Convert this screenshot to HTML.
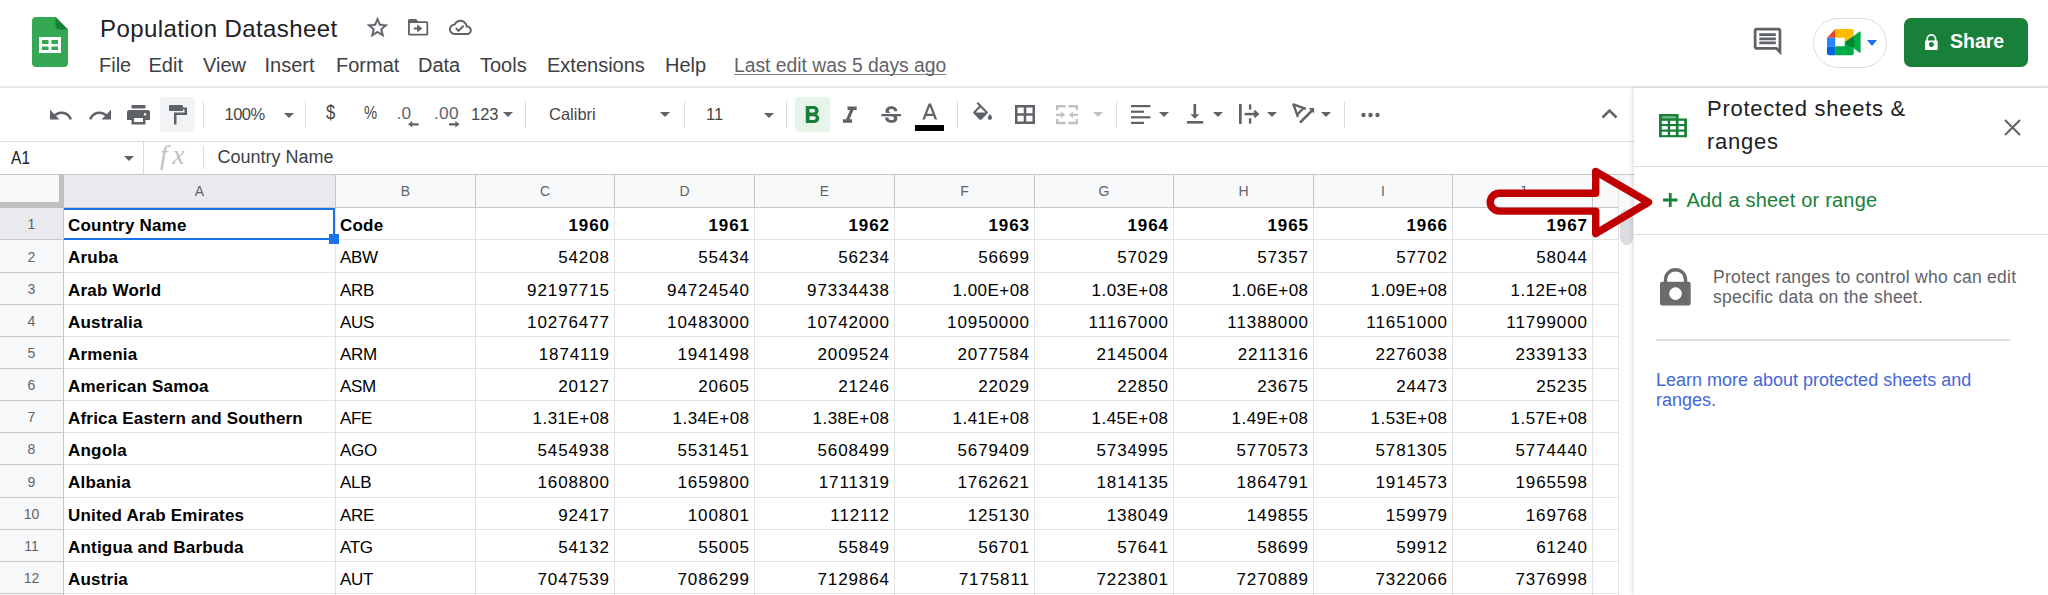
<!DOCTYPE html>
<html><head><meta charset="utf-8"><style>
html,body{margin:0;padding:0;background:#fff;width:2048px;height:595px;overflow:hidden;position:relative;font-family:"Liberation Sans",sans-serif;}
.abs{position:absolute;}
.menu{position:absolute;top:52px;font-size:20px;color:#3c4043;line-height:26px;white-space:nowrap}
.tb{position:absolute;fill:#5f6368}
.sep{position:absolute;top:101px;width:1px;height:27px;background:#dadce0}
.ddarr{position:absolute;top:112px;width:0;height:0;border-left:5.2px solid transparent;border-right:5.2px solid transparent;border-top:5.8px solid #5f6368}
.tbt{position:absolute;top:102px;font-size:16.5px;color:#444746;line-height:24px;white-space:nowrap}
.colh{height:32px;line-height:32px;text-align:center;font-size:14px;color:#5f6368}
.rowh{text-align:center;font-size:14px;color:#5f6368}
.cell{font-size:17px;color:#000;white-space:nowrap;letter-spacing:0.45px}
.cell.b{font-weight:bold}
</style></head><body>
<!-- logo -->
<svg class="abs" style="left:32px;top:17px" width="36" height="50" viewBox="0 0 36 50">
<path d="M4 0 H23.5 L36 12.5 V46 Q36 50 32 50 H4 Q0 50 0 46 V4 Q0 0 4 0 Z" fill="#34a853"/>
<path d="M23.5 0 L36 12.5 H27.5 Q23.5 12.5 23.5 8.5 Z" fill="#188038"/>
<path d="M7 20 H29 V36 H7 Z M10 23 V27 H16.5 V23 Z M19.5 23 V27 H26 V23 Z M10 29.5 V33 H16.5 V29.5 Z M19.5 29.5 V33 H26 V29.5 Z" fill="#fff" fill-rule="evenodd"/>
</svg>
<div class="abs" style="left:100px;top:13.7px;font-size:24px;letter-spacing:0.4px;color:#202124;line-height:30px;white-space:nowrap">Population Datasheet</div>
<!-- star -->
<svg class="abs" style="left:364.7px;top:14.9px" width="25" height="25" viewBox="0 0 24 24"><path fill="#5f6368" stroke="#5f6368" stroke-width="0.35" d="M22 9.24l-7.19-.62L12 2 9.19 8.63 2 9.24l5.46 4.73L5.82 21 12 17.27 18.18 21l-1.63-7.03L22 9.24zM12 15.4l-3.76 2.27 1-4.28-3.32-2.88 4.38-.38L12 6.1l1.71 4.04 4.38.38-3.32 2.88 1 4.28L12 15.4z"/></svg>
<!-- folder -->
<svg class="abs" style="left:408px;top:18.8px" width="21" height="17" viewBox="0 0 21 17"><path fill="#5f6368" fill-rule="evenodd" d="M0 1.5 Q0 0 1.5 0 H8 L10 2.2 H18.7 Q20.2 2.2 20.2 3.7 V14.9 Q20.2 16.4 18.7 16.4 H1.5 Q0 16.4 0 14.9 Z M1.8 4.1 H18.4 V14.7 H1.8 Z"/><path fill="#5f6368" d="M5.9 8.4 H9.2 V5.3 L14.2 9.5 L9.2 13.4 V10.6 H5.9 Z"/></svg>
<!-- cloud -->
<svg class="abs" style="left:449px;top:15.8px" width="22.8" height="22.8" viewBox="0 0 24 24"><path fill="#5f6368" d="M19.35 10.04C18.67 6.59 15.64 4 12 4 9.11 4 6.6 5.64 5.35 8.04 2.34 8.36 0 10.91 0 14c0 3.31 2.69 6 6 6h13c2.76 0 5-2.24 5-5 0-2.640-2.05-4.78-4.65-4.960zM19 18H6c-2.21 0-4-1.79-4-4 0-2.05 1.53-3.76 3.56-3.97l1.07-.11.5-.95C8.080 7.14 9.940 6 12 6c2.62 0 4.88 1.86 5.39 4.43l.3 1.5 1.53.11c1.56.1 2.78 1.41 2.78 2.96 0 1.65-1.35 3-3 3zm-9-3.82l-2.090-2.090L6.5 13.5 10 17l6.010-6.010-1.410-1.410z"/></svg>

<div class="menu" style="left:99px">File</div>
<div class="menu" style="left:148.5px">Edit</div>
<div class="menu" style="left:203px">View</div>
<div class="menu" style="left:264.5px">Insert</div>
<div class="menu" style="left:336px">Format</div>
<div class="menu" style="left:418px">Data</div>
<div class="menu" style="left:480px">Tools</div>
<div class="menu" style="left:547px">Extensions</div>
<div class="menu" style="left:665px">Help</div>
<div class="menu" style="left:734px;top:52.7px;color:#5f6368;text-decoration:underline;text-underline-offset:2px;text-decoration-skip-ink:none;text-decoration-color:#80868b;font-size:19.3px">Last edit was 5 days ago</div>

<!-- comment icon -->
<svg class="abs" style="left:1750.9px;top:24.6px" width="33.1" height="33.1" viewBox="0 0 24 24"><path fill="#5f6368" d="M21.99 4c0-1.1-.89-2-1.99-2H4c-1.1 0-2 .9-2 2v12c0 1.1.9 2 2 2h14l4 4-.01-18zM20 4v13.17L18.83 16H4V4h16zM6 12h12v2H6zm0-3h12v2H6zm0-3h12v2H6z"/></svg>
<!-- meet -->
<div class="abs" style="left:1813.2px;top:17.6px;width:72px;height:48px;border:1px solid #dadce0;border-radius:25px;box-sizing:content-box"></div>
<svg class="abs" style="left:1827.4px;top:29.1px" width="34" height="27" viewBox="0 0 34 27">
<path fill="#ffba00" d="M8.2 0 H24.7 Q26.7 0 26.7 2 V7.1 L17.7 13.1 V8.7 H8.2 Z"/>
<path fill="#00ac47" d="M17.7 13.1 V17.2 H8.2 V26.2 H24.7 Q26.7 26.2 26.7 24.2 V19.3 Z"/>
<path fill="#00ac47" d="M26.7 7.1 L31.8 3 Q33.6 1.8 33.6 4 V22.5 Q33.6 24.6 31.8 23.3 L26.7 19.3 Z"/>
<path fill="#00832d" d="M17.7 13.1 L21 16.6 L26.7 19.3 L27.5 13.1 L26.7 7.1 L22.2 10 Z"/>
<path fill="#e94235" d="M0 8.7 L8.2 0 V8.7 Z"/>
<path fill="#2684fc" d="M0 8.7 H8.2 V17.6 H0 Z"/>
<path fill="#0066da" d="M0 17.6 H8.2 V26.2 H2 Q0 26.2 0 24.2 Z"/>
</svg>
<div class="abs" style="left:1867px;top:40px;width:0;height:0;border-left:5px solid transparent;border-right:5px solid transparent;border-top:6px solid #1a73e8"></div>
<!-- share -->
<div class="abs" style="left:1904px;top:18px;width:124px;height:49px;background:#188038;border-radius:7px"></div>
<svg class="abs" style="left:1924.8px;top:33.5px" width="13" height="16" viewBox="0 0 13 16"><path d="M2.15 7 V5 A4.2 4.2 0 0 1 10.55 5 V7" fill="none" stroke="#fff" stroke-width="1.7"/><path fill="#fff" fill-rule="evenodd" d="M1 6.5 H11.7 Q12.7 6.5 12.7 7.5 V14.9 Q12.7 15.9 11.7 15.9 H1 Q0 15.9 0 14.9 V7.5 Q0 6.5 1 6.5 Z M6.4 8.1 A2.5 2.5 0 1 0 6.41 8.1 Z"/></svg>
<div class="abs" style="left:1950px;top:28.5px;font-size:19.5px;font-weight:bold;color:#fff;line-height:24px">Share</div>

<!-- header bottom line -->
<div class="abs" style="left:0;top:86px;width:2048px;height:2.3px;background:#e6e8eb"></div>

<!-- toolbar -->
<div class="abs" style="left:0;top:141px;width:1634px;height:1px;background:#dadce0"></div>
<svg class="tb" style="left:49px;top:108px" width="24" height="13" viewBox="0 0 24 13"><path d="M1 1.5 V11.5 H10.5 L7 8 A8.5 8.5 0 0 1 20.5 11.8 L23 11 A11 11 0 0 0 5.2 6.2 Z"/></svg>
<svg class="tb" style="left:88px;top:108px" width="24" height="13" viewBox="0 0 24 13"><path d="M23 1.5 V11.5 H13.5 L17 8 A8.5 8.5 0 0 0 3.5 11.8 L1 11 A11 11 0 0 1 18.8 6.2 Z"/></svg>
<svg class="tb" style="left:127px;top:105px" width="23" height="20" viewBox="0 0 23 20"><rect x="4.5" y="0" width="14" height="3.5"/><path d="M2 5 H21 Q23 5 23 7 V15 H18.5 V19.5 H4.5 V15 H0 V7 Q0 5 2 5 Z M7 13 V17 H16 V13 Z M18 8 A1.3 1.3 0 1 0 18.01 8 Z" fill-rule="evenodd"/></svg>
<div class="abs" style="left:160px;top:97px;width:35px;height:35px;background:#f1f3f4;border-radius:4px"></div>
<svg class="tb" style="left:169px;top:105px" width="19" height="20" viewBox="0 0 19 20"><rect x="0" y="0" width="14" height="6" rx="1"/><path d="M14 2.5 H18 V10 H7.5 V19.5 H5 V7.5 H15.5 V4.5 H14 Z"/></svg>
<div class="sep" style="left:203px"></div>
<div class="tbt" style="left:224.5px;letter-spacing:-0.5px">100%</div>
<div class="ddarr" style="left:283.5px;top:112.7px"></div>
<div class="sep" style="left:305px"></div>
<div class="tbt" style="left:326px;font-size:19.5px;top:100px;transform:scaleX(0.85);transform-origin:0 0">$</div>
<div class="tbt" style="left:363.6px;font-size:18px;top:100.5px;transform:scaleX(0.82);transform-origin:0 0">%</div>
<div class="tbt" style="left:396.5px;font-size:17.3px;top:101px;color:#5f6368;letter-spacing:0.3px">.0</div>
<div class="tbt" style="left:434px;font-size:17.3px;top:101px;color:#5f6368;letter-spacing:0.3px">.00</div>
<svg class="tb" style="left:407.7px;top:121.2px" width="11" height="7" viewBox="0 0 11 7"><path d="M0 3.3 L4.2 0 V2.2 H10.6 V4.4 H4.2 V6.6 Z"/></svg>
<svg class="tb" style="left:449.3px;top:121.2px" width="11" height="7" viewBox="0 0 11 7"><path d="M10.6 3.3 L6.4 0 V2.2 H0 V4.4 H6.4 V6.6 Z"/></svg>
<div class="tbt" style="left:471px">123</div>
<div class="ddarr" style="left:503px"></div>
<div class="sep" style="left:525px"></div>
<div class="tbt" style="left:549px">Calibri</div>
<div class="ddarr" style="left:659.8px"></div>
<div class="sep" style="left:684px"></div>
<div class="tbt" style="left:706px">11</div>
<div class="ddarr" style="left:764.3px;top:112.9px"></div>
<div class="sep" style="left:786px"></div>
<div class="abs" style="left:795px;top:97px;width:35px;height:35px;background:#e6f4ea;border-radius:4px"></div>
<svg class="abs" style="left:796.8px;top:101.2px" width="30.1" height="29.3" viewBox="0 0 24 24" preserveAspectRatio="none"><path fill="#188038" d="M15.6 10.79c.97-.67 1.65-1.77 1.65-2.79 0-2.26-1.75-4-4-4H7v14h7.04c2.090 0 3.71-1.7 3.71-3.79 0-1.52-.86-2.82-2.15-3.42zM10 6.5h3c.83 0 1.5.67 1.5 1.5s-.67 1.5-1.5 1.5h-3v-3zm3.5 9H10v-3h3.5c.83 0 1.5.67 1.5 1.5s-.67 1.5-1.5 1.5z"/></svg>
<svg class="tb" style="left:836.1px;top:102.4px" width="27.6" height="27.6" viewBox="0 0 24 24"><path d="M10 4v3h2.21l-3.42 8H6v3h8v-3h-2.21l3.42-8H18V4z"/></svg>
<svg class="tb" style="left:877.5px;top:103.3px" width="26.4" height="26.4" viewBox="0 0 24 24"><path d="M7.24 8.75c-.26-.48-.39-1.03-.39-1.67 0-.61.13-1.16.4-1.670.26-.5.63-.93 1.11-1.29.48-.35 1.05-.63 1.7-.83.66-.19 1.39-.29 2.18-.29.81 0 1.54.11 2.21.34.66.22 1.23.54 1.69.94.47.4.83.88 1.08 1.43.25.55.38 1.15.38 1.81h-3.01c0-.31-.05-.59-.15-.85-.09-.27-.24-.49-.44-.68-.2-.19-.45-.33-.75-.44-.3-.1-.66-.16-1.06-.16-.39 0-.74.04-1.03.13-.29.09-.53.21-.72.36-.19.16-.34.34-.44.55-.1.21-.15.43-.15.66 0 .48.25.88.74 1.21.38.25.77.48 1.41.7H7.39c-.05-.08-.11-.17-.15-.25zM21 12v-2H3v2h9.62c.18.07.4.14.55.2.37.17.66.34.87.51.21.17.35.36.43.57.07.2.11.43.11.69 0 .23-.05.45-.14.66-.09.2-.23.38-.42.53-.19.15-.42.26-.71.35-.29.08-.63.13-1.010.13-.43 0-.83-.04-1.18-.13s-.66-.23-.91-.42c-.25-.19-.45-.44-.59-.75-.14-.31-.25-.76-.25-1.21H6.4c0 .55.08 1.13.24 1.58.16.45.37.85.65 1.21.28.35.6.66.98.92.37.26.78.48 1.22.65.44.17.9.3 1.38.39.48.08.96.13 1.44.13.8 0 1.53-.09 2.18-.28s1.21-.45 1.67-.79c.46-.34.82-.77 1.07-1.27s.38-1.07.38-1.71c0-.6-.1-1.14-.31-1.61-.05-.11-.11-.23-.17-.33H21z"/></svg>
<svg class="tb" style="left:915.7px;top:99.85px" width="27.6" height="27.6" viewBox="0 0 24 24"><path d="M11 3L5.5 17h2.25l1.12-3h6.25l1.12 3h2.25L13 3h-2zm-1.38 9L12 5.67 14.38 12H9.62z"/></svg>
<div class="abs" style="left:915px;top:125px;width:29px;height:6px;background:#000"></div>
<div class="sep" style="left:957px"></div>
<svg class="tb" style="left:970.45px;top:101.7px" width="25.2" height="25.2" viewBox="0 0 24 24"><path d="M16.56 8.94L7.62 0 6.21 1.41l2.38 2.38-5.15 5.15c-.59.59-.59 1.54 0 2.12l5.5 5.5c.29.29.68.44 1.06.44s.77-.15 1.06-.44l5.5-5.5c.59-.58.59-1.53 0-2.12zM5.21 10L10 5.21 14.79 10H5.21zM19 11.5s-2 2.17-2 3.5c0 1.1.9 2 2 2s2-.9 2-2c0-1.33-2-3.5-2-3.5z"/></svg>
<svg class="tb" style="left:1015px;top:105px" width="20" height="19" viewBox="0 0 20 19"><path d="M0 0 H20 V19 H0 Z M2.5 2.5 V8.3 H8.7 V2.5 Z M11.3 2.5 V8.3 H17.5 V2.5 Z M2.5 10.7 V16.5 H8.7 V10.7 Z M11.3 10.7 V16.5 H17.5 V10.7 Z" fill-rule="evenodd"/></svg>
<svg class="abs" style="left:1056px;top:104.5px" width="22" height="20" viewBox="0 0 22 20" fill="#bdc1c6"><path d="M0 0 H9.6 V2.5 H2.3 V5.3 H0 Z M0 14 H2.3 V16.7 H9.6 V19.2 H0 Z M0 8.8 H5 V6.4 L9.2 9.85 L5 13.3 V10.9 H0 Z"/><path d="M22 0 H12.4 V2.5 H19.7 V5.3 H22 Z M22 14 H19.7 V16.7 H12.4 V19.2 H22 Z M22 8.8 H17 V6.4 L12.8 9.85 L17 13.3 V10.9 H22 Z"/></svg>
<div class="ddarr" style="left:1092.5px;top:112px;border-top-color:#bdc1c6"></div>
<div class="sep" style="left:1116px"></div>
<svg class="tb" style="left:1131px;top:105px" width="20" height="19" viewBox="0 0 20 19"><rect x="0" y="0" width="19.5" height="2.2"/><rect x="0" y="5.6" width="13" height="2.2"/><rect x="0" y="11.2" width="19.5" height="2.2"/><rect x="0" y="16.8" width="13" height="2.2"/></svg>
<div class="ddarr" style="left:1158.8px"></div>
<svg class="tb" style="left:1186.9px;top:104px" width="17" height="20" viewBox="0 0 17 20"><rect x="6.45" y="0" width="2.7" height="11"/><path d="M3.3 10.2 H12.3 L7.8 14.7 Z"/><rect x="0" y="17" width="16.2" height="2.6"/></svg>
<div class="ddarr" style="left:1212.9px"></div>
<svg class="tb" style="left:1238.9px;top:104.2px" width="21" height="20" viewBox="0 0 21 20"><rect x="0" y="0" width="2.7" height="19.9"/><rect x="9.9" y="0.3" width="2.4" height="5.3"/><rect x="9.9" y="14.2" width="2.4" height="5.4"/><path d="M5.6 10.05 H18" stroke="#5f6368" stroke-width="2.5" fill="none"/><path d="M15.3 6.9 L18.6 10.05 L15.3 13.2" stroke="#5f6368" stroke-width="2.4" fill="none"/></svg>
<div class="ddarr" style="left:1267.4px"></div>
<svg class="tb" style="left:1292px;top:103px" width="24" height="22" viewBox="0 0 24 22"><path d="M13.9 5.8 L1.4 1.4 L6 14" stroke="#5f6368" stroke-width="2.3" fill="none" stroke-linejoin="round"/><path d="M11.6 5 L5.2 11.6" stroke="#5f6368" stroke-width="2.3" fill="none"/><path d="M8 19.6 L20.6 7" stroke="#5f6368" stroke-width="2.5" fill="none"/><path d="M16.6 4.9 H22.1 V10.5 Z"/></svg>
<div class="ddarr" style="left:1321px"></div>
<div class="sep" style="left:1344px"></div>
<svg class="tb" style="left:1361px;top:112px" width="19" height="6" viewBox="0 0 19 6"><circle cx="2.5" cy="3" r="2.2"/><circle cx="9.5" cy="3" r="2.2"/><circle cx="16.5" cy="3" r="2.2"/></svg>
<svg class="abs" style="left:1601px;top:108px" width="17" height="11" viewBox="0 0 17 11"><path d="M1.5 9.5 L8.5 2.5 L15.5 9.5" fill="none" stroke="#5f6368" stroke-width="2.5"/></svg>

<!-- formula bar -->
<div class="abs" style="left:11px;top:145px;font-size:18px;color:#202124;line-height:26px;letter-spacing:0.3px;transform:scaleX(0.86);transform-origin:0 0">A1</div>
<div class="ddarr" style="left:124px;top:156px"></div>
<div class="abs" style="left:143px;top:142px;width:1px;height:32px;background:#dadce0"></div>
<div class="abs" style="left:160px;top:138.8px;font-size:27px;font-style:italic;font-family:'Liberation Serif',serif;color:#bdc1c6;line-height:32px;letter-spacing:5px">fx</div>
<div class="abs" style="left:203px;top:146px;width:1px;height:23px;background:#dadce0"></div>
<div class="abs" style="left:217.5px;top:143.8px;font-size:18px;color:#3c4043;line-height:26px">Country Name</div>

<!-- grid -->
<div class="abs" style="left:0;top:175px;width:1618px;height:32px;background:#f8f9fa"></div>
<div class="abs" style="left:64px;top:175px;width:271px;height:32px;background:#e8eaed"></div>
<div class="abs" style="left:0;top:208px;width:63px;height:387px;background:#f8f9fa"></div>
<div class="abs" style="left:0;top:208px;width:63px;height:31px;background:#e8eaed"></div>
<div class="abs" style="left:0;top:207px;width:1618px;height:1px;background:#c7c7c7"></div>
<div class="abs" style="left:0;top:239px;width:63px;height:1px;background:#c7c7c7"></div>
<div class="abs" style="left:64px;top:239px;width:1554px;height:1px;background:#e2e3e3"></div>
<div class="abs" style="left:0;top:272px;width:63px;height:1px;background:#c7c7c7"></div>
<div class="abs" style="left:64px;top:272px;width:1554px;height:1px;background:#e2e3e3"></div>
<div class="abs" style="left:0;top:304px;width:63px;height:1px;background:#c7c7c7"></div>
<div class="abs" style="left:64px;top:304px;width:1554px;height:1px;background:#e2e3e3"></div>
<div class="abs" style="left:0;top:336px;width:63px;height:1px;background:#c7c7c7"></div>
<div class="abs" style="left:64px;top:336px;width:1554px;height:1px;background:#e2e3e3"></div>
<div class="abs" style="left:0;top:368px;width:63px;height:1px;background:#c7c7c7"></div>
<div class="abs" style="left:64px;top:368px;width:1554px;height:1px;background:#e2e3e3"></div>
<div class="abs" style="left:0;top:400px;width:63px;height:1px;background:#c7c7c7"></div>
<div class="abs" style="left:64px;top:400px;width:1554px;height:1px;background:#e2e3e3"></div>
<div class="abs" style="left:0;top:432px;width:63px;height:1px;background:#c7c7c7"></div>
<div class="abs" style="left:64px;top:432px;width:1554px;height:1px;background:#e2e3e3"></div>
<div class="abs" style="left:0;top:464px;width:63px;height:1px;background:#c7c7c7"></div>
<div class="abs" style="left:64px;top:464px;width:1554px;height:1px;background:#e2e3e3"></div>
<div class="abs" style="left:0;top:497px;width:63px;height:1px;background:#c7c7c7"></div>
<div class="abs" style="left:64px;top:497px;width:1554px;height:1px;background:#e2e3e3"></div>
<div class="abs" style="left:0;top:529px;width:63px;height:1px;background:#c7c7c7"></div>
<div class="abs" style="left:64px;top:529px;width:1554px;height:1px;background:#e2e3e3"></div>
<div class="abs" style="left:0;top:561px;width:63px;height:1px;background:#c7c7c7"></div>
<div class="abs" style="left:64px;top:561px;width:1554px;height:1px;background:#e2e3e3"></div>
<div class="abs" style="left:0;top:593px;width:63px;height:1px;background:#c7c7c7"></div>
<div class="abs" style="left:64px;top:593px;width:1554px;height:1px;background:#e2e3e3"></div>
<div class="abs" style="left:0;top:174px;width:1634px;height:1px;background:#c7c7c7"></div>
<div class="abs" style="left:335px;top:175px;width:1px;height:32px;background:#c7c7c7"></div>
<div class="abs" style="left:335px;top:208px;width:1px;height:387px;background:#e2e3e3"></div>
<div class="abs" style="left:475px;top:175px;width:1px;height:32px;background:#c7c7c7"></div>
<div class="abs" style="left:475px;top:208px;width:1px;height:387px;background:#e2e3e3"></div>
<div class="abs" style="left:614px;top:175px;width:1px;height:32px;background:#c7c7c7"></div>
<div class="abs" style="left:614px;top:208px;width:1px;height:387px;background:#e2e3e3"></div>
<div class="abs" style="left:754px;top:175px;width:1px;height:32px;background:#c7c7c7"></div>
<div class="abs" style="left:754px;top:208px;width:1px;height:387px;background:#e2e3e3"></div>
<div class="abs" style="left:894px;top:175px;width:1px;height:32px;background:#c7c7c7"></div>
<div class="abs" style="left:894px;top:208px;width:1px;height:387px;background:#e2e3e3"></div>
<div class="abs" style="left:1034px;top:175px;width:1px;height:32px;background:#c7c7c7"></div>
<div class="abs" style="left:1034px;top:208px;width:1px;height:387px;background:#e2e3e3"></div>
<div class="abs" style="left:1173px;top:175px;width:1px;height:32px;background:#c7c7c7"></div>
<div class="abs" style="left:1173px;top:208px;width:1px;height:387px;background:#e2e3e3"></div>
<div class="abs" style="left:1313px;top:175px;width:1px;height:32px;background:#c7c7c7"></div>
<div class="abs" style="left:1313px;top:208px;width:1px;height:387px;background:#e2e3e3"></div>
<div class="abs" style="left:1452px;top:175px;width:1px;height:32px;background:#c7c7c7"></div>
<div class="abs" style="left:1452px;top:208px;width:1px;height:387px;background:#e2e3e3"></div>
<div class="abs" style="left:1592px;top:175px;width:1px;height:32px;background:#c7c7c7"></div>
<div class="abs" style="left:1592px;top:208px;width:1px;height:387px;background:#e2e3e3"></div>
<div class="abs" style="left:1618px;top:175px;width:1px;height:32px;background:#c7c7c7"></div>
<div class="abs" style="left:1618px;top:208px;width:1px;height:387px;background:#e2e3e3"></div>
<div class="abs" style="left:63px;top:175px;width:1px;height:420px;background:#c7c7c7"></div>
<div class="abs" style="left:0;top:175px;width:59px;height:27px;background:#f8f9fa"></div>
<div class="abs" style="left:0;top:202px;width:64px;height:6px;background:#c0c0c0"></div>
<div class="abs" style="left:59px;top:175px;width:5px;height:33px;background:#c0c0c0"></div>
<div class="abs colh" style="left:64px;top:175px;width:271px">A</div>
<div class="abs colh" style="left:336px;top:175px;width:139px">B</div>
<div class="abs colh" style="left:476px;top:175px;width:138px">C</div>
<div class="abs colh" style="left:615px;top:175px;width:139px">D</div>
<div class="abs colh" style="left:755px;top:175px;width:139px">E</div>
<div class="abs colh" style="left:895px;top:175px;width:139px">F</div>
<div class="abs colh" style="left:1035px;top:175px;width:138px">G</div>
<div class="abs colh" style="left:1174px;top:175px;width:139px">H</div>
<div class="abs colh" style="left:1314px;top:175px;width:138px">I</div>
<div class="abs colh" style="left:1453px;top:175px;width:139px">J</div>
<div class="abs rowh" style="left:0;top:209px;width:63px;height:31px;line-height:31px">1</div>
<div class="abs cell b" style="left:68px;top:210px;height:31px;line-height:31px;letter-spacing:0.2px">Country Name</div>
<div class="abs cell b" style="left:340px;top:210px;height:31px;line-height:31px;letter-spacing:0.2px">Code</div>
<div class="abs cell b" style="right:1438.1px;top:210px;height:31px;line-height:31px;letter-spacing:0.9px">1960</div>
<div class="abs cell b" style="right:1298.1px;top:210px;height:31px;line-height:31px;letter-spacing:0.9px">1961</div>
<div class="abs cell b" style="right:1158.1px;top:210px;height:31px;line-height:31px;letter-spacing:0.9px">1962</div>
<div class="abs cell b" style="right:1018.1px;top:210px;height:31px;line-height:31px;letter-spacing:0.9px">1963</div>
<div class="abs cell b" style="right:879.1px;top:210px;height:31px;line-height:31px;letter-spacing:0.9px">1964</div>
<div class="abs cell b" style="right:739.1px;top:210px;height:31px;line-height:31px;letter-spacing:0.9px">1965</div>
<div class="abs cell b" style="right:600.1px;top:210px;height:31px;line-height:31px;letter-spacing:0.9px">1966</div>
<div class="abs cell b" style="right:460.1px;top:210px;height:31px;line-height:31px;letter-spacing:0.9px">1967</div>
<div class="abs rowh" style="left:0;top:241px;width:63px;height:32px;line-height:32px">2</div>
<div class="abs cell b" style="left:68px;top:242px;height:32px;line-height:32px;letter-spacing:0.2px">Aruba</div>
<div class="abs cell" style="left:340px;top:242px;height:32px;line-height:32px;letter-spacing:-0.3px">ABW</div>
<div class="abs cell" style="right:1438.1px;top:242px;height:32px;line-height:32px;letter-spacing:0.9px">54208</div>
<div class="abs cell" style="right:1298.1px;top:242px;height:32px;line-height:32px;letter-spacing:0.9px">55434</div>
<div class="abs cell" style="right:1158.1px;top:242px;height:32px;line-height:32px;letter-spacing:0.9px">56234</div>
<div class="abs cell" style="right:1018.1px;top:242px;height:32px;line-height:32px;letter-spacing:0.9px">56699</div>
<div class="abs cell" style="right:879.1px;top:242px;height:32px;line-height:32px;letter-spacing:0.9px">57029</div>
<div class="abs cell" style="right:739.1px;top:242px;height:32px;line-height:32px;letter-spacing:0.9px">57357</div>
<div class="abs cell" style="right:600.1px;top:242px;height:32px;line-height:32px;letter-spacing:0.9px">57702</div>
<div class="abs cell" style="right:460.1px;top:242px;height:32px;line-height:32px;letter-spacing:0.9px">58044</div>
<div class="abs rowh" style="left:0;top:274px;width:63px;height:31px;line-height:31px">3</div>
<div class="abs cell b" style="left:68px;top:275px;height:31px;line-height:31px;letter-spacing:0.2px">Arab World</div>
<div class="abs cell" style="left:340px;top:275px;height:31px;line-height:31px;letter-spacing:-0.3px">ARB</div>
<div class="abs cell" style="right:1438.1px;top:275px;height:31px;line-height:31px;letter-spacing:0.9px">92197715</div>
<div class="abs cell" style="right:1298.1px;top:275px;height:31px;line-height:31px;letter-spacing:0.9px">94724540</div>
<div class="abs cell" style="right:1158.1px;top:275px;height:31px;line-height:31px;letter-spacing:0.9px">97334438</div>
<div class="abs cell" style="right:1018.55px;top:275px;height:31px;line-height:31px;letter-spacing:0.45px">1.00E+08</div>
<div class="abs cell" style="right:879.55px;top:275px;height:31px;line-height:31px;letter-spacing:0.45px">1.03E+08</div>
<div class="abs cell" style="right:739.55px;top:275px;height:31px;line-height:31px;letter-spacing:0.45px">1.06E+08</div>
<div class="abs cell" style="right:600.55px;top:275px;height:31px;line-height:31px;letter-spacing:0.45px">1.09E+08</div>
<div class="abs cell" style="right:460.55px;top:275px;height:31px;line-height:31px;letter-spacing:0.45px">1.12E+08</div>
<div class="abs rowh" style="left:0;top:306px;width:63px;height:31px;line-height:31px">4</div>
<div class="abs cell b" style="left:68px;top:307px;height:31px;line-height:31px;letter-spacing:0.2px">Australia</div>
<div class="abs cell" style="left:340px;top:307px;height:31px;line-height:31px;letter-spacing:-0.3px">AUS</div>
<div class="abs cell" style="right:1438.1px;top:307px;height:31px;line-height:31px;letter-spacing:0.9px">10276477</div>
<div class="abs cell" style="right:1298.1px;top:307px;height:31px;line-height:31px;letter-spacing:0.9px">10483000</div>
<div class="abs cell" style="right:1158.1px;top:307px;height:31px;line-height:31px;letter-spacing:0.9px">10742000</div>
<div class="abs cell" style="right:1018.1px;top:307px;height:31px;line-height:31px;letter-spacing:0.9px">10950000</div>
<div class="abs cell" style="right:879.1px;top:307px;height:31px;line-height:31px;letter-spacing:0.9px">11167000</div>
<div class="abs cell" style="right:739.1px;top:307px;height:31px;line-height:31px;letter-spacing:0.9px">11388000</div>
<div class="abs cell" style="right:600.1px;top:307px;height:31px;line-height:31px;letter-spacing:0.9px">11651000</div>
<div class="abs cell" style="right:460.1px;top:307px;height:31px;line-height:31px;letter-spacing:0.9px">11799000</div>
<div class="abs rowh" style="left:0;top:338px;width:63px;height:31px;line-height:31px">5</div>
<div class="abs cell b" style="left:68px;top:339px;height:31px;line-height:31px;letter-spacing:0.2px">Armenia</div>
<div class="abs cell" style="left:340px;top:339px;height:31px;line-height:31px;letter-spacing:-0.3px">ARM</div>
<div class="abs cell" style="right:1438.1px;top:339px;height:31px;line-height:31px;letter-spacing:0.9px">1874119</div>
<div class="abs cell" style="right:1298.1px;top:339px;height:31px;line-height:31px;letter-spacing:0.9px">1941498</div>
<div class="abs cell" style="right:1158.1px;top:339px;height:31px;line-height:31px;letter-spacing:0.9px">2009524</div>
<div class="abs cell" style="right:1018.1px;top:339px;height:31px;line-height:31px;letter-spacing:0.9px">2077584</div>
<div class="abs cell" style="right:879.1px;top:339px;height:31px;line-height:31px;letter-spacing:0.9px">2145004</div>
<div class="abs cell" style="right:739.1px;top:339px;height:31px;line-height:31px;letter-spacing:0.9px">2211316</div>
<div class="abs cell" style="right:600.1px;top:339px;height:31px;line-height:31px;letter-spacing:0.9px">2276038</div>
<div class="abs cell" style="right:460.1px;top:339px;height:31px;line-height:31px;letter-spacing:0.9px">2339133</div>
<div class="abs rowh" style="left:0;top:370px;width:63px;height:31px;line-height:31px">6</div>
<div class="abs cell b" style="left:68px;top:371px;height:31px;line-height:31px;letter-spacing:0.2px">American Samoa</div>
<div class="abs cell" style="left:340px;top:371px;height:31px;line-height:31px;letter-spacing:-0.3px">ASM</div>
<div class="abs cell" style="right:1438.1px;top:371px;height:31px;line-height:31px;letter-spacing:0.9px">20127</div>
<div class="abs cell" style="right:1298.1px;top:371px;height:31px;line-height:31px;letter-spacing:0.9px">20605</div>
<div class="abs cell" style="right:1158.1px;top:371px;height:31px;line-height:31px;letter-spacing:0.9px">21246</div>
<div class="abs cell" style="right:1018.1px;top:371px;height:31px;line-height:31px;letter-spacing:0.9px">22029</div>
<div class="abs cell" style="right:879.1px;top:371px;height:31px;line-height:31px;letter-spacing:0.9px">22850</div>
<div class="abs cell" style="right:739.1px;top:371px;height:31px;line-height:31px;letter-spacing:0.9px">23675</div>
<div class="abs cell" style="right:600.1px;top:371px;height:31px;line-height:31px;letter-spacing:0.9px">24473</div>
<div class="abs cell" style="right:460.1px;top:371px;height:31px;line-height:31px;letter-spacing:0.9px">25235</div>
<div class="abs rowh" style="left:0;top:402px;width:63px;height:31px;line-height:31px">7</div>
<div class="abs cell b" style="left:68px;top:403px;height:31px;line-height:31px;letter-spacing:0.2px">Africa Eastern and Southern</div>
<div class="abs cell" style="left:340px;top:403px;height:31px;line-height:31px;letter-spacing:-0.3px">AFE</div>
<div class="abs cell" style="right:1438.55px;top:403px;height:31px;line-height:31px;letter-spacing:0.45px">1.31E+08</div>
<div class="abs cell" style="right:1298.55px;top:403px;height:31px;line-height:31px;letter-spacing:0.45px">1.34E+08</div>
<div class="abs cell" style="right:1158.55px;top:403px;height:31px;line-height:31px;letter-spacing:0.45px">1.38E+08</div>
<div class="abs cell" style="right:1018.55px;top:403px;height:31px;line-height:31px;letter-spacing:0.45px">1.41E+08</div>
<div class="abs cell" style="right:879.55px;top:403px;height:31px;line-height:31px;letter-spacing:0.45px">1.45E+08</div>
<div class="abs cell" style="right:739.55px;top:403px;height:31px;line-height:31px;letter-spacing:0.45px">1.49E+08</div>
<div class="abs cell" style="right:600.55px;top:403px;height:31px;line-height:31px;letter-spacing:0.45px">1.53E+08</div>
<div class="abs cell" style="right:460.55px;top:403px;height:31px;line-height:31px;letter-spacing:0.45px">1.57E+08</div>
<div class="abs rowh" style="left:0;top:434px;width:63px;height:31px;line-height:31px">8</div>
<div class="abs cell b" style="left:68px;top:435px;height:31px;line-height:31px;letter-spacing:0.2px">Angola</div>
<div class="abs cell" style="left:340px;top:435px;height:31px;line-height:31px;letter-spacing:-0.3px">AGO</div>
<div class="abs cell" style="right:1438.1px;top:435px;height:31px;line-height:31px;letter-spacing:0.9px">5454938</div>
<div class="abs cell" style="right:1298.1px;top:435px;height:31px;line-height:31px;letter-spacing:0.9px">5531451</div>
<div class="abs cell" style="right:1158.1px;top:435px;height:31px;line-height:31px;letter-spacing:0.9px">5608499</div>
<div class="abs cell" style="right:1018.1px;top:435px;height:31px;line-height:31px;letter-spacing:0.9px">5679409</div>
<div class="abs cell" style="right:879.1px;top:435px;height:31px;line-height:31px;letter-spacing:0.9px">5734995</div>
<div class="abs cell" style="right:739.1px;top:435px;height:31px;line-height:31px;letter-spacing:0.9px">5770573</div>
<div class="abs cell" style="right:600.1px;top:435px;height:31px;line-height:31px;letter-spacing:0.9px">5781305</div>
<div class="abs cell" style="right:460.1px;top:435px;height:31px;line-height:31px;letter-spacing:0.9px">5774440</div>
<div class="abs rowh" style="left:0;top:466px;width:63px;height:32px;line-height:32px">9</div>
<div class="abs cell b" style="left:68px;top:467px;height:32px;line-height:32px;letter-spacing:0.2px">Albania</div>
<div class="abs cell" style="left:340px;top:467px;height:32px;line-height:32px;letter-spacing:-0.3px">ALB</div>
<div class="abs cell" style="right:1438.1px;top:467px;height:32px;line-height:32px;letter-spacing:0.9px">1608800</div>
<div class="abs cell" style="right:1298.1px;top:467px;height:32px;line-height:32px;letter-spacing:0.9px">1659800</div>
<div class="abs cell" style="right:1158.1px;top:467px;height:32px;line-height:32px;letter-spacing:0.9px">1711319</div>
<div class="abs cell" style="right:1018.1px;top:467px;height:32px;line-height:32px;letter-spacing:0.9px">1762621</div>
<div class="abs cell" style="right:879.1px;top:467px;height:32px;line-height:32px;letter-spacing:0.9px">1814135</div>
<div class="abs cell" style="right:739.1px;top:467px;height:32px;line-height:32px;letter-spacing:0.9px">1864791</div>
<div class="abs cell" style="right:600.1px;top:467px;height:32px;line-height:32px;letter-spacing:0.9px">1914573</div>
<div class="abs cell" style="right:460.1px;top:467px;height:32px;line-height:32px;letter-spacing:0.9px">1965598</div>
<div class="abs rowh" style="left:0;top:499px;width:63px;height:31px;line-height:31px">10</div>
<div class="abs cell b" style="left:68px;top:500px;height:31px;line-height:31px;letter-spacing:0.2px">United Arab Emirates</div>
<div class="abs cell" style="left:340px;top:500px;height:31px;line-height:31px;letter-spacing:-0.3px">ARE</div>
<div class="abs cell" style="right:1438.1px;top:500px;height:31px;line-height:31px;letter-spacing:0.9px">92417</div>
<div class="abs cell" style="right:1298.1px;top:500px;height:31px;line-height:31px;letter-spacing:0.9px">100801</div>
<div class="abs cell" style="right:1158.1px;top:500px;height:31px;line-height:31px;letter-spacing:0.9px">112112</div>
<div class="abs cell" style="right:1018.1px;top:500px;height:31px;line-height:31px;letter-spacing:0.9px">125130</div>
<div class="abs cell" style="right:879.1px;top:500px;height:31px;line-height:31px;letter-spacing:0.9px">138049</div>
<div class="abs cell" style="right:739.1px;top:500px;height:31px;line-height:31px;letter-spacing:0.9px">149855</div>
<div class="abs cell" style="right:600.1px;top:500px;height:31px;line-height:31px;letter-spacing:0.9px">159979</div>
<div class="abs cell" style="right:460.1px;top:500px;height:31px;line-height:31px;letter-spacing:0.9px">169768</div>
<div class="abs rowh" style="left:0;top:531px;width:63px;height:31px;line-height:31px">11</div>
<div class="abs cell b" style="left:68px;top:532px;height:31px;line-height:31px;letter-spacing:0.2px">Antigua and Barbuda</div>
<div class="abs cell" style="left:340px;top:532px;height:31px;line-height:31px;letter-spacing:-0.3px">ATG</div>
<div class="abs cell" style="right:1438.1px;top:532px;height:31px;line-height:31px;letter-spacing:0.9px">54132</div>
<div class="abs cell" style="right:1298.1px;top:532px;height:31px;line-height:31px;letter-spacing:0.9px">55005</div>
<div class="abs cell" style="right:1158.1px;top:532px;height:31px;line-height:31px;letter-spacing:0.9px">55849</div>
<div class="abs cell" style="right:1018.1px;top:532px;height:31px;line-height:31px;letter-spacing:0.9px">56701</div>
<div class="abs cell" style="right:879.1px;top:532px;height:31px;line-height:31px;letter-spacing:0.9px">57641</div>
<div class="abs cell" style="right:739.1px;top:532px;height:31px;line-height:31px;letter-spacing:0.9px">58699</div>
<div class="abs cell" style="right:600.1px;top:532px;height:31px;line-height:31px;letter-spacing:0.9px">59912</div>
<div class="abs cell" style="right:460.1px;top:532px;height:31px;line-height:31px;letter-spacing:0.9px">61240</div>
<div class="abs rowh" style="left:0;top:563px;width:63px;height:31px;line-height:31px">12</div>
<div class="abs cell b" style="left:68px;top:564px;height:31px;line-height:31px;letter-spacing:0.2px">Austria</div>
<div class="abs cell" style="left:340px;top:564px;height:31px;line-height:31px;letter-spacing:-0.3px">AUT</div>
<div class="abs cell" style="right:1438.1px;top:564px;height:31px;line-height:31px;letter-spacing:0.9px">7047539</div>
<div class="abs cell" style="right:1298.1px;top:564px;height:31px;line-height:31px;letter-spacing:0.9px">7086299</div>
<div class="abs cell" style="right:1158.1px;top:564px;height:31px;line-height:31px;letter-spacing:0.9px">7129864</div>
<div class="abs cell" style="right:1018.1px;top:564px;height:31px;line-height:31px;letter-spacing:0.9px">7175811</div>
<div class="abs cell" style="right:879.1px;top:564px;height:31px;line-height:31px;letter-spacing:0.9px">7223801</div>
<div class="abs cell" style="right:739.1px;top:564px;height:31px;line-height:31px;letter-spacing:0.9px">7270889</div>
<div class="abs cell" style="right:600.1px;top:564px;height:31px;line-height:31px;letter-spacing:0.9px">7322066</div>
<div class="abs cell" style="right:460.1px;top:564px;height:31px;line-height:31px;letter-spacing:0.9px">7376998</div>
<!-- selection -->
<div class="abs" style="left:64px;top:208px;width:271px;height:32px;border-top:2px solid #1a73e8;border-bottom:2px solid #1a73e8;border-right:2px solid #1a73e8;box-sizing:border-box"></div>
<div class="abs" style="left:328.5px;top:233.5px;width:10px;height:10px;background:#1a73e8"></div>
<!-- scrollbar -->
<div class="abs" style="left:1619px;top:175px;width:15px;height:32px;background:#f8f9fa"></div>
<div class="abs" style="left:1618px;top:175px;width:1px;height:420px;background:#e2e3e3"></div>
<div class="abs" style="left:1620px;top:209px;width:13px;height:36px;background:#dadce0;border-radius:7px"></div>

<!-- side panel -->
<div class="abs" style="left:1634px;top:88px;width:414px;height:507px;background:#fff;box-shadow:-2px 0 4px rgba(60,64,67,0.15)"></div>
<svg class="abs" style="left:1659.3px;top:113.9px" width="28" height="24" viewBox="0 0 28 24"><path d="M0 0 H19.6 V4.4 H28 V23.3 H0 Z" fill="#188038"/><rect x="3.1" y="2.3" width="13.7" height="2" fill="#fff" opacity="0.45"/><g fill="#fff"><rect x="2.8" y="6.8" width="5.9" height="3.2"/><rect x="11.2" y="6.8" width="5.6" height="3.2"/><rect x="19.6" y="6.8" width="5.6" height="3.2"/><rect x="2.8" y="12.1" width="5.9" height="3.4"/><rect x="11.2" y="12.1" width="5.6" height="3.4"/><rect x="19.6" y="12.1" width="5.6" height="3.4"/><rect x="2.8" y="17.7" width="5.9" height="3.4"/><rect x="11.2" y="17.7" width="5.6" height="3.4"/><rect x="19.6" y="17.7" width="5.6" height="3.4"/></g></svg>
<div class="abs" style="left:1707px;top:91.6px;font-size:22px;color:#202124;line-height:33px;width:300px;letter-spacing:0.73px">Protected sheets &amp;<br>ranges</div>
<svg class="abs" style="left:2004px;top:119px" width="17" height="17" viewBox="0 0 17 17"><path d="M1 1 L16 16 M16 1 L1 16" stroke="#5f6368" stroke-width="2"/></svg>
<div class="abs" style="left:1634px;top:166px;width:414px;height:1px;background:#dadce0"></div>
<svg class="abs" style="left:1663px;top:193.3px" width="14.5" height="14" viewBox="0 0 14.5 14"><path d="M0 7 H14.5 M7.25 0 V14" stroke="#188038" stroke-width="2.8"/></svg>
<div class="abs" style="left:1686.5px;top:187px;font-size:20px;color:#188038;line-height:26px;letter-spacing:0.2px">Add a sheet or range</div>
<div class="abs" style="left:1634px;top:234px;width:414px;height:1px;background:#dadce0"></div>
<svg class="abs" style="left:1660px;top:267.9px" width="31" height="38" viewBox="0 0 31 38"><path d="M5.5 15 V11.75 A10.05 10.05 0 0 1 25.6 11.75 V15" fill="none" stroke="#696b6d" stroke-width="3.4"/><path fill="#696b6d" fill-rule="evenodd" d="M2 13.8 H28.7 Q30.7 13.8 30.7 15.8 V35.4 Q30.7 37.4 28.7 37.4 H2 Q0 37.4 0 35.4 V15.8 Q0 13.8 2 13.8 Z M15.5 19.3 A6.3 6.3 0 1 0 15.51 19.3 Z"/></svg>
<div class="abs" style="left:1713px;top:266.5px;font-size:17.5px;color:#5f6368;line-height:20.6px;width:340px;letter-spacing:0.25px">Protect ranges to control who can edit<br>specific data on the sheet.</div>
<div class="abs" style="left:1656px;top:339px;width:354px;height:2px;background:#dadce0"></div>
<div class="abs" style="left:1656px;top:369.5px;font-size:18px;color:#4567d6;line-height:20.5px;width:360px">Learn more about protected sheets and<br>ranges.</div>

<!-- annotation arrow -->
<svg class="abs" style="left:0;top:0" width="2048" height="595" viewBox="0 0 2048 595"><path d="M1595.7 193.2 V171.5 L1648.5 202.2 L1595.7 233.5 V211.1 H1499.2 A8.95 8.95 0 0 1 1499.2 193.2 Z" fill="none" stroke="#c00000" stroke-width="7.4" stroke-linejoin="round"/></svg>
</body></html>
